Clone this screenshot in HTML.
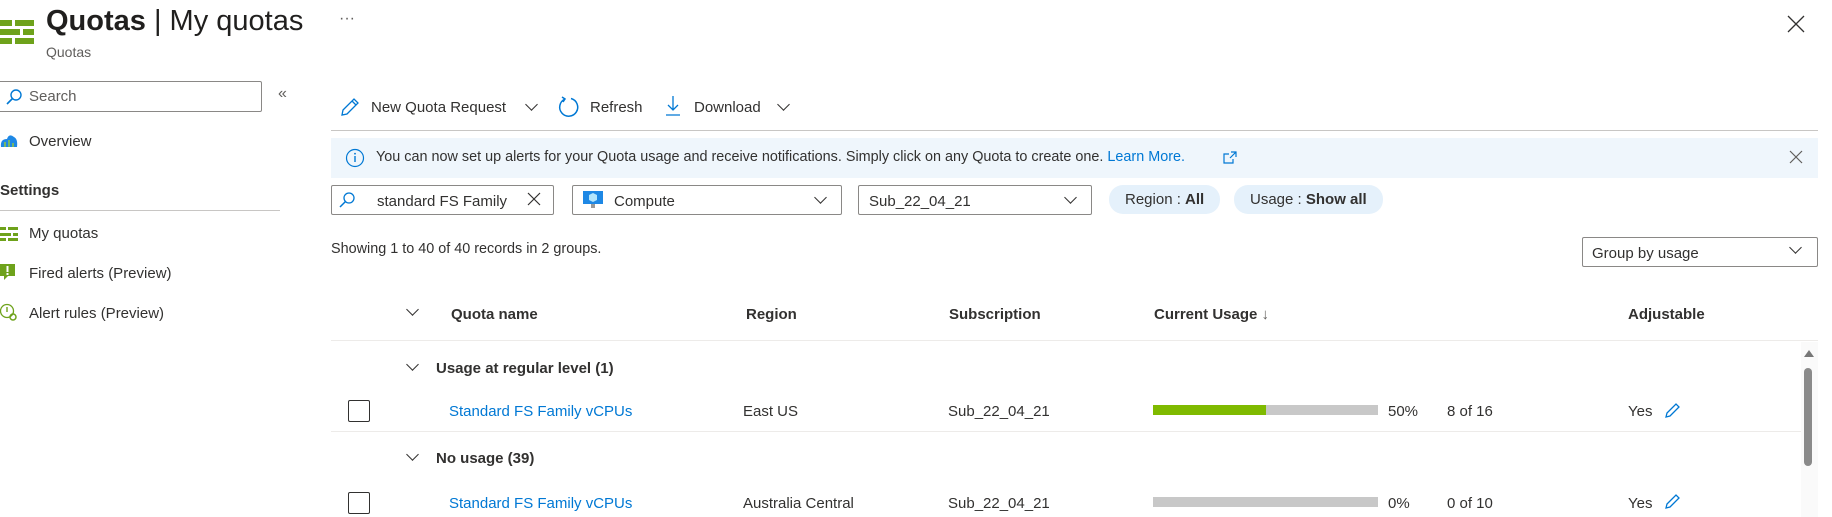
<!DOCTYPE html>
<html><head><meta charset="utf-8"><style>
*{margin:0;padding:0;box-sizing:border-box}
body{width:1832px;height:517px;overflow:hidden;background:#fff;font-family:"Liberation Sans",sans-serif;color:#323130;position:relative;font-size:15px}
.a{position:absolute;white-space:nowrap}
.b{font-weight:bold}
.link{color:#0078d4}
.box{position:absolute;border:1px solid #8a8886;border-radius:2px;background:#fff}
.pill{position:absolute;background:#e5f1fb;border-radius:14px;height:29px;line-height:29px;padding:0 16px;font-size:15px}
.hl{position:absolute;height:1px;background:#e1dfdd}
.chev{position:absolute;width:9px;height:9px;border-right:1.5px solid #323130;border-bottom:1.5px solid #323130;transform:rotate(45deg)}
.cb{position:absolute;width:22px;height:22px;border:1.5px solid #323130;border-radius:2px}
.bar{position:absolute;height:10px;background:#c8c8c8}
</style></head><body>
<svg class="a" style="left:0;top:18px" width="34" height="28"><g fill="#6ea21b"><rect x="0" y="2" width="12" height="6"/><rect x="15" y="2" width="19" height="6"/><rect x="0" y="11" width="20" height="6"/><rect x="23" y="11" width="11" height="6"/><rect x="0" y="20" width="12" height="6"/><rect x="15" y="20" width="19" height="6"/></g></svg>
<div class="a" style="left:46px;top:3px;font-size:29px;line-height:36px;color:#201f1e"><span class="b">Quotas</span> | My quotas</div>
<div class="a" style="left:46px;top:44px;font-size:14px;color:#605e5c">Quotas</div>
<div class="a" style="left:339px;top:10px;font-size:16px;color:#605e5c">···</div>
<svg class="a" style="left:1787px;top:15px" width="18" height="18"><path d="M1 1L17 17M17 1L1 17" stroke="#323130" stroke-width="1.3"/></svg>
<div class="box" style="left:-2px;top:81px;width:264px;height:31px"></div>
<svg class="a" style="left:5px;top:88px" width="18" height="18"><circle cx="11" cy="7" r="5" fill="none" stroke="#0078d4" stroke-width="1.4"/><line x1="7.5" y1="10.5" x2="2" y2="16" stroke="#0078d4" stroke-width="1.6"/></svg>
<div class="a" style="left:29px;top:88px;font-size:15px;color:#605e5c">Search</div>
<div class="a" style="left:278px;top:85px;font-size:16px;color:#605e5c">«</div>
<svg class="a" style="left:0;top:133px" width="18" height="16"><path d="M1 14 Q0 6 7 6 Q9 0 14 4 Q18 6 17 14Z" fill="#1e88e5"/><path d="M5 14V9M9 14V7M13 14V10" stroke="#8bc34a" stroke-width="1.6"/></svg>
<div class="a" style="left:29px;top:133px">Overview</div>
<div class="a b" style="left:0;top:182px">Settings</div>
<div class="hl" style="left:0;top:210px;width:280px;background:#c8c6c4"></div>
<svg class="a" style="left:0;top:226px" width="18" height="16"><g fill="#6ea21b"><rect x="0" y="1" width="6" height="3"/><rect x="8" y="1" width="10" height="3"/><rect x="0" y="7" width="11" height="3"/><rect x="13" y="7" width="5" height="3"/><rect x="0" y="12" width="6" height="3"/><rect x="8" y="12" width="10" height="3"/></g></svg>
<div class="a" style="left:29px;top:225px">My quotas</div>
<svg class="a" style="left:0;top:264px" width="16" height="18"><path d="M0 0H15V12H8L4 16V12H0Z" fill="#6ea21b"/><rect x="6.5" y="2" width="2" height="6" fill="#fff"/><rect x="6.5" y="9" width="2" height="2" fill="#fff"/></svg>
<div class="a" style="left:29px;top:265px">Fired alerts (Preview)</div>
<svg class="a" style="left:0;top:303px" width="18" height="18"><circle cx="7" cy="8" r="6.5" fill="none" stroke="#6ea21b" stroke-width="1.3"/><rect x="6.3" y="4" width="1.4" height="5" fill="#6ea21b"/><circle cx="13" cy="14" r="3" fill="none" stroke="#6ea21b" stroke-width="1.5"/></svg>
<div class="a" style="left:29px;top:305px">Alert rules (Preview)</div>
<svg class="a" style="left:340px;top:97px" width="20" height="20"><path d="M2 18L3 13L14 2L18 6L7 17Z M12 4L16 8" fill="none" stroke="#0078d4" stroke-width="1.3"/></svg>
<div class="a" style="left:371px;top:99px">New Quota Request</div>
<div class="chev" style="left:527px;top:100px"></div>
<svg class="a" style="left:558px;top:96px" width="22" height="22"><path d="M7 3A9 9 0 1 0 13 2.5" fill="none" stroke="#0078d4" stroke-width="1.5"/><path d="M4 1L7 3L5 6" fill="none" stroke="#0078d4" stroke-width="1.5"/></svg>
<div class="a" style="left:590px;top:99px">Refresh</div>
<svg class="a" style="left:665px;top:95px" width="16" height="22"><path d="M8 1V15M3 10L8 15L13 10M1 20H15" fill="none" stroke="#0078d4" stroke-width="1.3"/></svg>
<div class="a" style="left:694px;top:99px">Download</div>
<div class="chev" style="left:779px;top:100px"></div>
<div class="hl" style="left:331px;top:130px;width:1487px;background:#c8c6c4"></div>
<div class="a" style="left:331px;top:138px;width:1487px;height:40px;background:#eff6fc"></div>
<svg class="a" style="left:345px;top:148px" width="20" height="20"><circle cx="10" cy="10" r="8.5" fill="none" stroke="#0078d4" stroke-width="1.2"/><rect x="9.3" y="8" width="1.4" height="6" fill="#0078d4"/><circle cx="10" cy="5.7" r="0.9" fill="#0078d4"/></svg>
<div class="a" style="left:376px;top:149px;font-size:14.4px">You can now set up alerts for your Quota usage and receive notifications. Simply click on any Quota to create one. <span class="link">Learn More.</span></div>
<svg class="a" style="left:1223px;top:151px" width="14" height="14"><path d="M6 3H1V12H10V8M8 1H13V6M13 1L7 7" fill="none" stroke="#0078d4" stroke-width="1.2"/></svg>
<svg class="a" style="left:1789px;top:150px" width="14" height="14"><path d="M1 1L13 13M13 1L1 13" stroke="#605e5c" stroke-width="1.2"/></svg>
<div class="box" style="left:331px;top:185px;width:223px;height:30px"></div>
<svg class="a" style="left:338px;top:191px" width="18" height="18"><circle cx="11" cy="7" r="5" fill="none" stroke="#0078d4" stroke-width="1.3"/><line x1="7.5" y1="10.5" x2="2" y2="16" stroke="#0078d4" stroke-width="1.5"/></svg>
<div class="a" style="left:377px;top:193px">standard FS Family</div>
<svg class="a" style="left:527px;top:192px" width="14" height="14"><path d="M1 1L13 13M13 1L1 13" stroke="#323130" stroke-width="1.2"/></svg>
<div class="box" style="left:572px;top:185px;width:270px;height:30px"></div>
<svg class="a" style="left:582px;top:190px" width="22" height="20"><rect x="1" y="1" width="20" height="13" fill="#1e88e5"/><path d="M11 3L15 5V10L11 12L7 10V5Z" fill="#b3e5fc"/><rect x="9" y="14" width="4" height="4" fill="#999"/></svg>
<div class="a" style="left:614px;top:193px">Compute</div>
<div class="chev" style="left:816px;top:193px"></div>
<div class="box" style="left:858px;top:185px;width:234px;height:30px"></div>
<div class="a" style="left:869px;top:193px">Sub_22_04_21</div>
<div class="chev" style="left:1066px;top:193px"></div>
<div class="pill" style="left:1109px;top:185px">Region : <b>All</b></div>
<div class="pill" style="left:1234px;top:185px">Usage : <b>Show all</b></div>
<div class="a" style="left:331px;top:241px;font-size:14.4px">Showing 1 to 40 of 40 records in 2 groups.</div>
<div class="box" style="left:1582px;top:237px;width:236px;height:30px"></div>
<div class="a" style="left:1592px;top:245px">Group by usage</div>
<div class="chev" style="left:1791px;top:243px"></div>
<div class="chev" style="left:408px;top:305px"></div>
<div class="a b" style="left:451px;top:306px">Quota name</div>
<div class="a b" style="left:746px;top:306px">Region</div>
<div class="a b" style="left:949px;top:306px">Subscription</div>
<div class="a b" style="left:1154px;top:306px">Current Usage <span style="font-weight:normal;color:#605e5c">↓</span></div>
<div class="a b" style="left:1628px;top:306px">Adjustable</div>
<div class="hl" style="left:331px;top:340px;width:1487px;background:#edebe9"></div>
<div class="chev" style="left:408px;top:360px"></div>
<div class="a b" style="left:436px;top:360px">Usage at regular level (1)</div>
<div class="cb" style="left:348px;top:400px"></div>
<div class="a link" style="left:449px;top:403px">Standard FS Family vCPUs</div>
<div class="a" style="left:743px;top:403px">East US</div>
<div class="a" style="left:948px;top:403px">Sub_22_04_21</div>
<div class="bar" style="left:1153px;top:405px;width:225px"></div>
<div class="bar" style="left:1153px;top:405px;width:113px;background:#7fba00"></div>
<div class="a" style="left:1388px;top:403px">50%</div>
<div class="a" style="left:1447px;top:403px">8 of 16</div>
<div class="a" style="left:1628px;top:403px">Yes</div>
<svg class="a" style="left:1664px;top:401px" width="18" height="18"><path d="M2 16L3 12L12 3L15 6L6 15Z" fill="none" stroke="#0078d4" stroke-width="1.3"/></svg>
<div class="hl" style="left:331px;top:431px;width:1470px;background:#edebe9"></div>
<div class="chev" style="left:408px;top:450px"></div>
<div class="a b" style="left:436px;top:450px">No usage (39)</div>
<div class="cb" style="left:348px;top:492px"></div>
<div class="a link" style="left:449px;top:495px">Standard FS Family vCPUs</div>
<div class="a" style="left:743px;top:495px">Australia Central</div>
<div class="a" style="left:948px;top:495px">Sub_22_04_21</div>
<div class="bar" style="left:1153px;top:497px;width:225px"></div>
<div class="a" style="left:1388px;top:495px">0%</div>
<div class="a" style="left:1447px;top:495px">0 of 10</div>
<div class="a" style="left:1628px;top:495px">Yes</div>
<svg class="a" style="left:1664px;top:492px" width="18" height="18"><path d="M2 16L3 12L12 3L15 6L6 15Z" fill="none" stroke="#0078d4" stroke-width="1.3"/></svg>
<div class="a" style="left:1801px;top:342px;width:17px;height:175px;background:#fafafa"></div>
<svg class="a" style="left:1803px;top:348px" width="12" height="10"><path d="M1 9L6 2L11 9Z" fill="#777"/></svg>
<div class="a" style="left:1804px;top:368px;width:8px;height:98px;background:#8a8a8a;border-radius:4px"></div>
</body></html>
